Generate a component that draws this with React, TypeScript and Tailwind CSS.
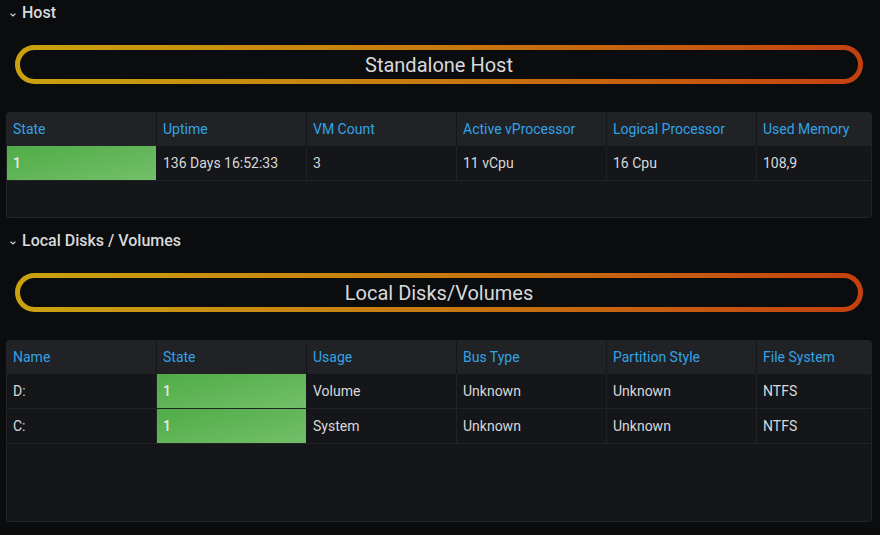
const font = { fontFamily: "Roboto, 'Liberation Sans', sans-serif" };

type Cell = { text: string; ok?: boolean };

const hostCols = ["State", "Uptime", "VM Count", "Active vProcessor", "Logical Processor", "Used Memory"];
const hostRows: Cell[][] = [
  [
    { text: "1", ok: true },
    { text: "136 Days 16:52:33" },
    { text: "3" },
    { text: "11 vCpu" },
    { text: "16 Cpu" },
    { text: "108,9" },
  ],
];

const diskCols = ["Name", "State", "Usage", "Bus Type", "Partition Style", "File System"];
const diskRows: Cell[][] = [
  [
    { text: "D:" },
    { text: "1", ok: true },
    { text: "Volume" },
    { text: "Unknown" },
    { text: "Unknown" },
    { text: "NTFS" },
  ],
  [
    { text: "C:" },
    { text: "1", ok: true },
    { text: "System" },
    { text: "Unknown" },
    { text: "Unknown" },
    { text: "NTFS" },
  ],
];

const RowHeader = ({ title }: { title: string }) => (
  <div className="flex items-center h-[24px] pt-[2px] pl-[10px] gap-[6px]">
    <svg width="6" height="4" viewBox="0 0 6 4" className="mt-[3px]">
      <path d="M0.6 0.6 L3 3 L5.4 0.6" fill="none" stroke="#d8d9da" strokeWidth="1.2" />
    </svg>
    <span className="text-[16px] font-medium text-[#d8d9da]">{title}</span>
  </div>
);

const Pill = ({ title }: { title: string }) => (
  <div className="pt-[21px] pl-[15px] pr-[17px] h-[88px]">
    <div className="rounded-full p-[5px] bg-gradient-to-r from-[#c9a20f] via-[#c7790f] to-[#c4400f]">
      <div className="h-[29px] rounded-full bg-[#0b0c0e] flex items-center justify-center">
        <span className="text-[20px] text-[#d8d9da]">{title}</span>
      </div>
    </div>
  </div>
);

const Table = ({ cols, rows, height }: { cols: string[]; rows: Cell[][]; height: string }) => (
  <div className={`ml-[6px] mr-[8px] border border-[#202226] rounded-[3px] bg-[#141619] overflow-hidden ${height}`}>
    <div className="grid grid-cols-[150px_150px_150px_150px_150px_1fr] h-[33px] bg-[#202226]">
      {cols.map((c, i) => (
        <div
          key={c}
          className={`flex items-center pl-[6px] text-[14px] text-[#33a2e5] ${i < cols.length - 1 ? "border-r border-[#141619]" : ""}`}
        >
          {c}
        </div>
      ))}
    </div>
    {rows.map((r, ri) => (
      <div key={ri} className="grid grid-cols-[150px_150px_150px_150px_150px_1fr] h-[35px] border-b border-[#202226]">
        {r.map((cell, i) =>
          cell.ok ? (
            <div
              key={i}
              className="flex items-center pl-[6px] text-[14px] font-medium text-[#e8e8e8] bg-gradient-to-br from-[#4fac47] to-[#73bf69] border-r border-[#141619]"
            >
              {cell.text}
            </div>
          ) : (
            <div
              key={i}
              className={`flex items-center pl-[6px] text-[14px] text-[#d8d9da] ${i < r.length - 1 ? "border-r border-[#202226]" : ""}`}
            >
              {cell.text}
            </div>
          )
        )}
      </div>
    ))}
  </div>
);

export default function App() {
  return (
    <div className="w-[880px] h-[535px] bg-[#0b0c0e] overflow-hidden" style={font}>
      <RowHeader title="Host" />
      <Pill title="Standalone Host" />
      <Table cols={hostCols} rows={hostRows} height="h-[106px]" />
      <div className="mt-[10px]">
        <RowHeader title="Local Disks / Volumes" />
      </div>
      <Pill title="Local Disks/Volumes" />
      <Table cols={diskCols} rows={diskRows} height="h-[182px]" />
    </div>
  );
}
